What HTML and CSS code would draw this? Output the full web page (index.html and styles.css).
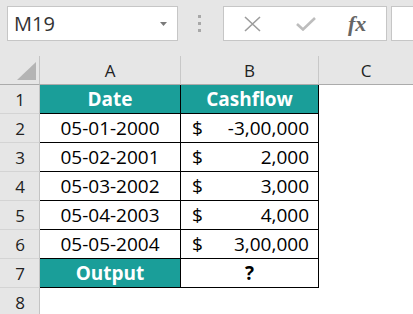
FILE: index.html
```html
<!DOCTYPE html>
<html lang="en">
<head>
    <meta charset="UTF-8">
    <meta name="viewport" content="width=device-width, initial-scale=1.0">
    <title>Cashflow</title>
    <link rel="stylesheet" href="styles.css">
</head>
<body>

<div class="toolbar">
    <div class="namebox">
        <span>M19</span>
        <svg class="drop" width="7" height="4" viewBox="0 0 7 4"><path d="M0 0H7L3.5 4Z" fill="#7a7a7a"/></svg>
    </div>
    <div class="grip"><i></i><i></i><i></i></div>
    <div class="fxbox">
        <svg class="icon" width="18" height="16" viewBox="0 0 18 16">
            <path d="M1 1L16 15M16 1L1 15" stroke="#9c9c9c" stroke-width="1.6" fill="none"/>
        </svg>
        <svg class="icon" width="20" height="14" viewBox="0 0 20 14">
            <path d="M1 7L7 12.5L19 1" stroke="#bdbdbd" stroke-width="2.6" fill="none"/>
        </svg>
        <span class="fx">fx</span>
    </div>
    <div class="formula"></div>
</div>

<div class="sheet">
    <div class="corner"><span></span></div>
    <div class="colhead">A</div>
    <div class="colhead">B</div>
    <div class="colhead last">C</div>

    <div class="rowhead">1</div>
    <div class="cell head">Date</div>
    <div class="cell head">Cashflow</div>
    <div class="blank"></div>

    <div class="rowhead">2</div>
    <div class="cell">05-01-2000</div>
    <div class="cell money"><span>$</span><span>-3,00,000</span></div>
    <div class="blank"></div>

    <div class="rowhead">3</div>
    <div class="cell">05-02-2001</div>
    <div class="cell money"><span>$</span><span>2,000</span></div>
    <div class="blank"></div>

    <div class="rowhead">4</div>
    <div class="cell">05-03-2002</div>
    <div class="cell money"><span>$</span><span>3,000</span></div>
    <div class="blank"></div>

    <div class="rowhead">5</div>
    <div class="cell">05-04-2003</div>
    <div class="cell money"><span>$</span><span>4,000</span></div>
    <div class="blank"></div>

    <div class="rowhead">6</div>
    <div class="cell">05-05-2004</div>
    <div class="cell money"><span>$</span><span>3,00,000</span></div>
    <div class="blank"></div>

    <div class="rowhead">7</div>
    <div class="cell head">Output</div>
    <div class="cell bold">?</div>
    <div class="blank"></div>

    <div class="rowhead">8</div>
    <div class="blank"></div>
    <div class="blank"></div>
    <div class="blank"></div>
</div>

</body>
</html>
```

FILE: styles.css
```css
body {
    margin: 0;
    overflow: hidden;
    font-family: "Open Sans", sans-serif;
    background-color: white;
}

.toolbar {
    display: flex;
    align-items: flex-start;
    height: 56px;
    padding: 6px 0 0 7px;
    box-sizing: border-box;
    background-color: #e6e6e6;
    overflow: hidden;
}

.toolbar > * {
    flex: none;
}

.namebox {
    display: flex;
    align-items: center;
    justify-content: space-between;
    width: 171px;
    height: 35px;
    box-sizing: border-box;
    padding: 0 10px 0 6px;
    background-color: white;
    border: 1px solid #c6c6c6;
    color: #333;
    font-size: 20px;
}

.grip {
    display: flex;
    flex-direction: column;
    gap: 4px;
    margin: 9px 22px 0 20px;
}

.grip i {
    width: 3px;
    height: 3px;
    background-color: #a8a8a8;
}

.fxbox {
    display: flex;
    align-items: center;
    width: 164px;
    height: 35px;
    box-sizing: border-box;
    padding-left: 20px;
    gap: 34px;
    background-color: white;
    border: 1px solid #c6c6c6;
}

.fxbox .icon {
    flex: none;
}

.fx {
    font-family: "Liberation Serif", serif;
    font-style: italic;
    font-weight: bold;
    font-size: 22px;
    color: #666;
    margin-left: -2px;
}

.formula {
    width: 60px;
    height: 35px;
    margin-left: 4px;
    box-sizing: border-box;
    background-color: white;
    border: 1px solid #c6c6c6;
}

.sheet {
    display: grid;
    grid-template-columns: 40px 141px 138px 1fr;
    grid-auto-rows: 29px;
}

.sheet > div {
    box-sizing: border-box;
    display: flex;
    align-items: center;
    justify-content: center;
}

.corner {
    background-color: #e6e6e6;
    border-right: 1px solid #c4c4c4;
    border-bottom: 1px solid #ababab;
    align-items: flex-end !important;
    justify-content: flex-end !important;
    padding: 0 3px 4px 0;
}

.corner span {
    width: 0;
    height: 0;
    border-left: 19px solid transparent;
    border-bottom: 18px solid #b4b4b4;
}

.colhead {
    background-color: #e6e6e6;
    border-right: 1px solid #c8c8c8;
    border-bottom: 1px solid #ababab;
    color: #222;
    font-size: 17px;
    padding-top: 1px;
}

.colhead.last {
    border-right: none;
}

.rowhead {
    background-color: #e6e6e6;
    border-right: 1px solid #c4c4c4;
    border-bottom: 1px solid #d4d4d4;
    color: #222;
    font-size: 17px;
    padding-left: 1px;
}

.cell {
    border-right: 1px solid #000;
    border-bottom: 1px solid #000;
    font-size: 19px;
    color: #000;
}

.cell.head {
    background-color: #1a9e99;
    color: white;
    font-weight: bold;
}

.cell.bold {
    font-weight: bold;
}

.cell.money {
    justify-content: space-between;
    padding: 0 9px 0 11px;
}
```
